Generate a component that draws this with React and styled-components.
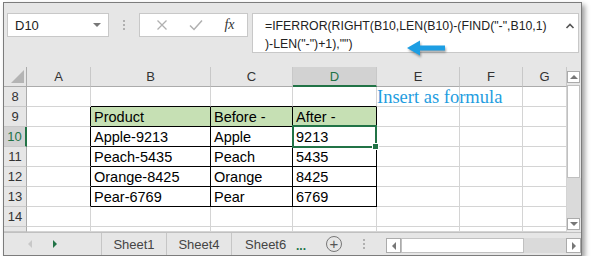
import styled, { createGlobalStyle } from "styled-components";

const GlobalStyle = createGlobalStyle`
  body {
    margin: 0;
    background: #ffffff;
    font-family: "Liberation Sans", Arial, sans-serif;
  }
`;

const Window = styled.div`
  margin: 2px 0 0 3px;
  width: 579px;
  height: 254px;
  box-sizing: border-box;
  border: 1px solid #7c7c7c;
  background: #e6e6e6;
  box-shadow: 3px 3px 5px rgba(0, 0, 0, 0.38);
  display: flex;
  flex-direction: column;
`;

const FormulaRow = styled.div`
  height: 64px;
  box-sizing: border-box;
  padding: 10px 0 0 3px;
  display: flex;
  align-items: flex-start;
`;

const NameBox = styled.div`
  width: 102px;
  height: 24px;
  box-sizing: border-box;
  background: #fff;
  border: 1px solid #c8c8c8;
  display: flex;
  align-items: center;
  justify-content: space-between;
  padding: 0 7px 0 7px;
  font-size: 13px;
  color: #222;
`;

const DropArrow = styled.span`
  width: 0;
  height: 0;
  border-left: 4px solid transparent;
  border-right: 4px solid transparent;
  border-top: 4px solid #777;
`;

const Grip = styled.div`
  width: 30px;
  height: 24px;
  display: flex;
  flex-direction: column;
  align-items: center;
  justify-content: center;
  gap: 2px;
  & > span {
    width: 2px;
    height: 2px;
    background: #b0b0b0;
  }
`;

const FxBox = styled.div`
  width: 109px;
  height: 24px;
  box-sizing: border-box;
  background: #fff;
  border: 1px solid #c8c8c8;
  display: flex;
  align-items: center;
  justify-content: space-around;
  padding: 0 2px 0 6px;
  margin-right: 4px;
`;

const FxIcon = styled.span`
  font-family: "Liberation Serif", serif;
  font-style: italic;
  font-size: 14px;
  color: #333;
`;

const FormulaBox = styled.div`
  position: relative;
  width: 327px;
  height: 40px;
  box-sizing: border-box;
  background: #fff;
  border: 1px solid #c8c8c8;
  padding: 3px 0 0 12px;
  font-size: 12.3px;
  line-height: 18px;
  color: #222;
  white-space: pre;
`;

const Caret = styled.svg`
  position: absolute;
  right: 3px;
  top: 8px;
`;

const Arrow = styled.svg`
  position: absolute;
  left: 153px;
  top: 25px;
  filter: drop-shadow(1px 2px 1px rgba(0, 0, 0, 0.35));
`;

const Body = styled.div`
  height: 165px;
  display: flex;
`;

const Sheet = styled.div`
  width: 563px;
  display: grid;
  grid-template-columns: 23px 64px 120px 82px 84px 83px 63px 44px;
  grid-template-rows: repeat(8, 20px) 5px;
  background: #fff;
`;

const Corner = styled.div`
  position: relative;
  background: #e6e6e6;
  border-right: 1px solid #ababab;
  border-bottom: 1px solid #ababab;
  &::after {
    content: "";
    position: absolute;
    right: 2px;
    bottom: 3px;
    width: 0;
    height: 0;
    border-left: 13px solid transparent;
    border-bottom: 13px solid #b4b4b4;
  }
`;

const ColHead = styled.div`
  box-sizing: border-box;
  background: ${(p) => (p.$active ? "#d2d2d2" : "#e6e6e6")};
  color: ${(p) => (p.$active ? "#217346" : "#333")};
  border-right: 1px solid #c8c8c8;
  border-bottom: ${(p) => (p.$active ? "2px solid #217346" : "1px solid #ababab")};
  font-size: 13px;
  display: flex;
  align-items: center;
  justify-content: center;
  padding-top: ${(p) => (p.$active ? "1px" : "0")};
`;

const RowHead = styled.div`
  box-sizing: border-box;
  background: ${(p) => (p.$active ? "#d2d2d2" : "#e6e6e6")};
  color: ${(p) => (p.$active ? "#217346" : "#333")};
  border-bottom: 1px solid #c8c8c8;
  border-right: ${(p) => (p.$active ? "2px solid #217346" : "1px solid #ababab")};
  font-size: 13px;
  display: flex;
  align-items: center;
  justify-content: center;
  overflow: hidden;
`;

const Cell = styled.div`
  position: relative;
  box-sizing: border-box;
  background: ${(p) => (p.$head ? "#c6e0b4" : "#fff")};
  border-right: 1px solid ${(p) => (p.$r ? "#000" : "#d4d4d4")};
  border-bottom: 1px solid ${(p) => (p.$b ? "#000" : "#d4d4d4")};
  font-size: 14.5px;
  color: #000;
  padding: 1px 0 0 3px;
  line-height: 18px;
  white-space: nowrap;
  overflow: visible;
`;

const Note = styled.span`
  position: relative;
  z-index: 1;
  margin-left: -3px;
  font-family: "Liberation Serif", serif;
  font-size: 18.5px;
  color: #1f9de0;
`;

const Selection = styled.div`
  position: absolute;
  left: -1px;
  top: -2px;
  right: -1px;
  bottom: -2px;
  border: 2px solid #217346;
  z-index: 2;
  &::after {
    content: "";
    position: absolute;
    right: -4px;
    bottom: -4px;
    width: 5px;
    height: 5px;
    background: #217346;
    border: 1px solid #fff;
  }
`;

const VScroll = styled.div`
  width: 14px;
  display: flex;
  flex-direction: column;
  padding-top: 4px;
  box-sizing: border-box;
  background: #e6e6e6;
`;

const ScrollBtn = styled.div`
  box-sizing: border-box;
  width: ${(p) => p.$w || "13px"};
  height: ${(p) => p.$h || "12px"};
  background: #fff;
  border: 1px solid #ababab;
  display: flex;
  align-items: center;
  justify-content: center;
  flex-shrink: 0;
`;

const Tri = styled.span`
  width: 0;
  height: 0;
  border: 4px solid transparent;
  ${(p) => `border-${p.$dir}: 4px solid #777;`}
  ${(p) => `border-${{ top: "bottom", bottom: "top", left: "right", right: "left" }[p.$dir]}-width: 0;`}
`;

const Thumb = styled.div`
  box-sizing: border-box;
  background: #fff;
  border: 1px solid #c0c0c0;
  width: ${(p) => p.$w || "13px"};
  height: ${(p) => p.$h || "93px"};
  margin: ${(p) => p.$m || "2px 0 0 0"};
`;

const Track = styled.div`
  flex: 1;
  background: #dadada;
  margin: ${(p) => p.$m || "0"};
`;

const TabBar = styled.div`
  height: 23px;
  display: flex;
  align-items: stretch;
  border-top: 1px solid #c0c0c0;
  box-sizing: border-box;
`;

const NavArea = styled.div`
  width: 98px;
  display: flex;
  align-items: center;
  padding-left: 24px;
  gap: 21px;
  box-sizing: border-box;
  border-right: 1px solid #c6c6c6;
`;

const NavArrow = styled.span`
  width: 0;
  height: 0;
  border-top: 4px solid transparent;
  border-bottom: 4px solid transparent;
  ${(p) =>
    p.$left
      ? "border-right: 4px solid #c8c8c8;"
      : "border-left: 4px solid #217346;"}
`;

const Tab = styled.div`
  width: ${(p) => (p.$last ? "59px" : "65px")};
  box-sizing: border-box;
  border-right: ${(p) => (p.$last ? "none" : "1px solid #c6c6c6")};
  display: flex;
  align-items: center;
  justify-content: ${(p) => (p.$last ? "flex-start" : "center")};
  padding-left: ${(p) => (p.$last ? "13px" : "0")};
  font-size: 13px;
  color: #444;
`;

const More = styled.div`
  width: 22px;
  display: flex;
  align-items: center;
  padding-left: 5px;
  font-weight: bold;
  color: #217346;
  font-size: 12px;
  padding-top: 3px;
`;

const AddBtn = styled.div`
  width: 14px;
  height: 14px;
  margin: auto 0 auto 8px;
  border-radius: 50%;
  border: 1px solid #777;
  display: flex;
  align-items: center;
  justify-content: center;
  font-size: 15px;
  line-height: 14px;
  color: #555;
`;

const TabGrip = styled(Grip)`
  width: 44px;
  height: auto;
`;

const HScroll = styled.div`
  width: 195px;
  height: 15px;
  margin-top: 5px;
  display: flex;
`;

const cols = ["A", "B", "C", "D", "E", "F", "G"];
const data = {
  9: ["Product", "Before -", "After -"],
  10: ["Apple-9213", "Apple", "9213"],
  11: ["Peach-5435", "Peach", "5435"],
  12: ["Orange-8425", "Orange", "8425"],
  13: ["Pear-6769", "Pear", "6769"],
};

function renderRow(r, partial) {
  const out = [
    <RowHead key={"h" + r} $active={r === 10}>
      {partial ? "" : r}
    </RowHead>,
  ];
  cols.forEach((c, i) => {
    const inTable = r >= 9 && r <= 13;
    const right = inTable && i <= 3;
    const bottom = r >= 8 && r <= 13 && i >= 1 && i <= 3;
    let content = null;
    if (data[r] && i >= 1 && i <= 3) content = data[r][i - 1];
    if (r === 8 && c === "E") content = <Note>Insert as formula</Note>;
    out.push(
      <Cell key={r + c} $r={right} $b={bottom} $head={r === 9 && i >= 1 && i <= 3}>
        {content}
        {r === 10 && c === "D" && <Selection />}
      </Cell>
    );
  });
  return out;
}

function App() {
  return (
    <>
      <GlobalStyle />
      <Window>
        <FormulaRow>
          <NameBox>
            D10
            <DropArrow />
          </NameBox>
          <Grip>
            <span />
            <span />
            <span />
          </Grip>
          <FxBox>
            <svg width="12" height="12" viewBox="0 0 12 12">
              <path d="M1.5 1.5 L10.5 10.5 M10.5 1.5 L1.5 10.5" stroke="#b0b0b0" strokeWidth="1.3" />
            </svg>
            <svg width="14" height="12" viewBox="0 0 14 12">
              <path d="M1 6.5 L5 10.5 L13 1.5" stroke="#b0b0b0" strokeWidth="1.5" fill="none" />
            </svg>
            <FxIcon>fx</FxIcon>
          </FxBox>
          <FormulaBox>
            {'=IFERROR(RIGHT(B10,LEN(B10)-(FIND("-",B10,1)\n)-LEN("-")+1),"")'}
            <Caret width="10" height="8" viewBox="0 0 10 8">
              <path d="M1.5 6 L5 2.5 L8.5 6" stroke="#555" strokeWidth="1.6" fill="none" />
            </Caret>
            <Arrow width="42" height="20" viewBox="0 0 42 20">
              <polygon points="1,9 14,1.5 14,16.5" fill="#1d9ee3" />
              <rect x="13" y="6.5" width="26" height="5" fill="#1d9ee3" />
            </Arrow>
          </FormulaBox>
        </FormulaRow>
        <Body>
          <Sheet>
            <Corner />
            {cols.map((c) => (
              <ColHead key={c} $active={c === "D"}>
                {c}
              </ColHead>
            ))}
            {[8, 9, 10, 11, 12, 13, 14].map((r) => renderRow(r))}
            {renderRow(15, true)}
          </Sheet>
          <VScroll>
            <ScrollBtn>
              <Tri $dir="bottom" />
            </ScrollBtn>
            <Thumb />
            <Track />
            <ScrollBtn style={{ marginBottom: 2 }}>
              <Tri $dir="top" />
            </ScrollBtn>
          </VScroll>
        </Body>
        <TabBar>
          <NavArea>
            <NavArrow $left />
            <NavArrow />
          </NavArea>
          <Tab>Sheet1</Tab>
          <Tab>Sheet4</Tab>
          <Tab $last>Sheet6</Tab>
          <More>...</More>
          <AddBtn>+</AddBtn>
          <TabGrip>
            <span />
            <span />
            <span />
          </TabGrip>
          <HScroll>
            <ScrollBtn $w="15px" $h="15px">
              <Tri $dir="right" />
            </ScrollBtn>
            <Thumb $w="123px" $h="15px" $m="0" />
            <Track />
            <ScrollBtn $w="15px" $h="15px">
              <Tri $dir="left" />
            </ScrollBtn>
          </HScroll>
        </TabBar>
      </Window>
    </>
  );
}

export default App;
